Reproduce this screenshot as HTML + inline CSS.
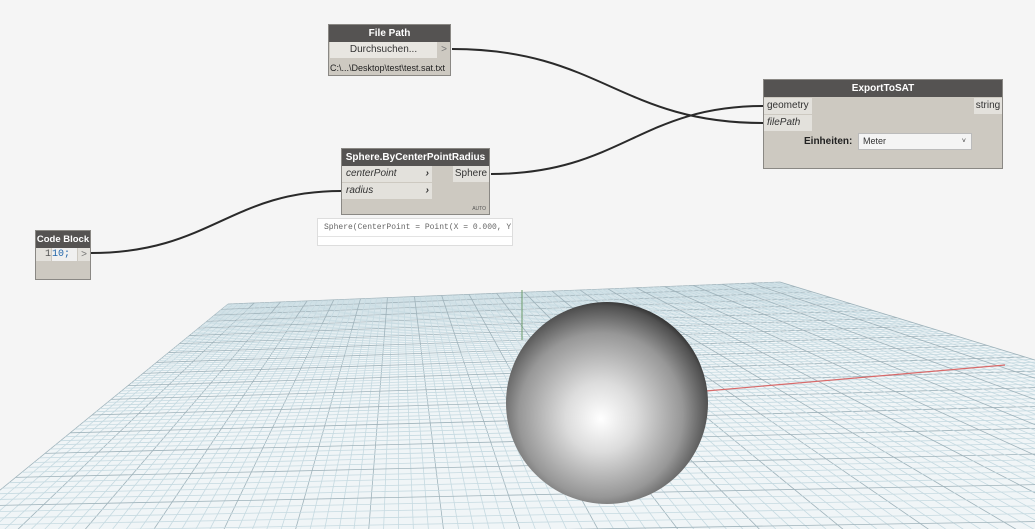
<!DOCTYPE html>
<html><head><meta charset="utf-8"><style>
html{overflow:hidden}
body{margin:0;width:1035px;height:529px;overflow:hidden;background:#f5f5f5;font-family:"Liberation Sans",sans-serif;position:relative}
.n{position:absolute;background:#cdc9c1;border:1px solid #8a8884;box-sizing:border-box}
.h{background:#555352;color:#fff;font-size:10px;font-weight:bold;text-align:center;height:17px;line-height:17px;white-space:nowrap}
.a{position:absolute;font-size:10px;color:#333;line-height:16px;white-space:nowrap}
.p{background:#e3e1dc;}
svg{position:absolute;left:0;top:0;overflow:hidden}
</style></head><body>
<svg id="g" width="1035" height="529"></svg>
<svg width="1035" height="529">
<defs><radialGradient id="sp" cx="0.47" cy="0.55" r="0.58" fx="0.47" fy="0.58">
<stop offset="0" stop-color="#ffffff"/><stop offset="0.3" stop-color="#dcdcdc"/><stop offset="0.7" stop-color="#979797"/><stop offset="0.92" stop-color="#505050"/><stop offset="1" stop-color="#1e1e1e"/></radialGradient></defs>
<line x1="522" y1="290" x2="522" y2="340" stroke="#6a9a6a" stroke-width="1"/>
<line x1="706" y1="391" x2="1005" y2="365" stroke="#d86a6a" stroke-width="1.2"/>
<circle cx="607" cy="403" r="101" fill="url(#sp)"/>
<g fill="none" stroke="#2a2a2a" stroke-width="2">
<path d="M452 49 C600 49 620 123 763 123"/>
<path d="M491 174 C620 174 640 106 763 106"/>
<path d="M91 253 C210 253 230 191 341 191"/>
</g>
</svg>
<div class="n" style="left:328px;top:24px;width:123px;height:52px">
<div class="h">File Path</div>
<div class="a" style="left:1px;top:17px;width:107px;height:16px;background:#e8e6e1;text-align:center">Durchsuchen...</div>
<div class="a" style="left:109px;top:17px;width:12px;text-align:center;color:#777">&gt;</div>
<div class="a" style="left:1px;top:35px;font-size:9px;color:#222">C:\...\Desktop\test\test.sat.txt</div>
</div>
<div class="n" style="left:341px;top:148px;width:149px;height:67px">
<div class="h">Sphere.ByCenterPointRadius</div>
<div class="a p" style="left:0;top:17px;width:90px;height:16px;font-style:italic;padding-left:4px;box-sizing:border-box">centerPoint<span style="position:absolute;right:3px;font-weight:bold">›</span></div>
<div class="a p" style="left:0;top:34px;width:90px;height:16px;font-style:italic;padding-left:4px;box-sizing:border-box">radius<span style="position:absolute;right:3px;font-weight:bold">›</span></div>
<div class="a p" style="left:111px;top:17px;width:36px;height:16px;text-align:center">Sphere</div>
<div class="a" style="right:3px;top:52px;font-size:5px;color:#555">AUTO</div>
</div>
<div style="position:absolute;left:317px;top:218px;width:196px;height:28px;background:#fff;border:1px solid #ddd;box-sizing:border-box;overflow:hidden">
<div style="font-family:'Liberation Mono',monospace;font-size:8px;color:#666;padding:4px 6px;border-bottom:1px solid #e3e3e3;white-space:nowrap;overflow:hidden">Sphere(CenterPoint = Point(X = 0.000, Y = 0.</div></div>
<div class="n" style="left:35px;top:230px;width:56px;height:50px">
<div class="h" style="font-size:9.5px">Code Block</div>
<div class="a" style="left:0;top:17px;width:15px;text-align:right;background:#e3e1dc;color:#555;font-family:'Liberation Mono',monospace;height:13px;line-height:13px">1</div>
<div class="a" style="left:16px;top:17px;width:25px;background:#f0f0f0;color:#2266aa;font-family:'Liberation Mono',monospace;height:13px;line-height:13px">10;</div>
<div class="a" style="left:42px;top:17px;width:12px;text-align:center;color:#777;height:13px;line-height:13px;background:#e3e1dc">&gt;</div>
</div>
<div class="n" style="left:763px;top:79px;width:240px;height:90px">
<div class="h">ExportToSAT</div>
<div class="a p" style="left:0;top:18px;width:45px;height:16px;padding-left:3px">geometry</div>
<div class="a p" style="left:0;top:35px;width:45px;height:16px;padding-left:3px;font-style:italic">filePath</div>
<div class="a p" style="right:0;top:18px;width:28px;height:16px;text-align:center">string</div>
<div class="a" style="left:40px;top:54px;font-weight:bold;color:#222">Einheiten:</div>
<div class="a" style="left:94px;top:53px;width:114px;height:17px;background:#f4f4f4;border:1px solid #bbb;box-sizing:border-box;font-size:9px;padding-left:4px;line-height:15px">Meter<span style="position:absolute;right:5px;font-size:7px">˅</span></div>
</div>
<script>
(function(){
var P=[[228,304],[780,282],[2146,700],[-257,700]];
function H(u,v){
var x0=P[0][0],y0=P[0][1],x1=P[1][0],y1=P[1][1],x2=P[2][0],y2=P[2][1],x3=P[3][0],y3=P[3][1];
var dx1=x1-x2,dx2=x3-x2,dy1=y1-y2,dy2=y3-y2,sx=x0-x1+x2-x3,sy=y0-y1+y2-y3;
var det=dx1*dy2-dx2*dy1;var g=(sx*dy2-dx2*sy)/det,h=(dx1*sy-sx*dy1)/det;
var a=x1-x0+g*x1,b=x3-x0+h*x3,c=x0,d=y1-y0+g*y1,e=y3-y0+h*y3,f=y0;
var w=g*u+h*v+1;return [(a*u+b*v+c)/w,(d*u+e*v+f)/w];}
var s='<polygon points="'+P.map(function(p){return p.join(',')}).join(' ')+'" fill="#f0f5f7"/>';
var N=100;
for(var i=0;i<=N;i++){var t=i/N;var col=i%5?'#c6dae1':'#9fb3bb';
var a=H(t,0),b=H(t,1);s+='<line x1="'+a[0]+'" y1="'+a[1]+'" x2="'+b[0]+'" y2="'+b[1]+'" stroke="'+col+'" stroke-width="0.8"/>';
a=H(0,t);b=H(1,t);s+='<line x1="'+a[0]+'" y1="'+a[1]+'" x2="'+b[0]+'" y2="'+b[1]+'" stroke="'+col+'" stroke-width="0.8"/>';}
document.getElementById('g').innerHTML=s;})();
</script>
</body></html>
